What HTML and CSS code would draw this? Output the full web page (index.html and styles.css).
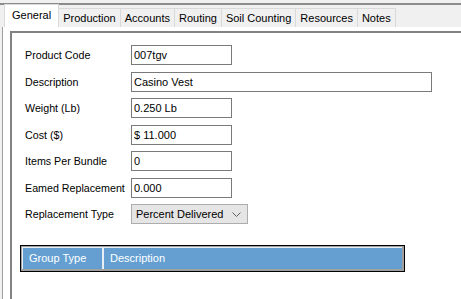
FILE: index.html
```html
<!DOCTYPE html>
<html lang="en">
<head>
    <meta charset="UTF-8">
    <meta name="viewport" content="width=device-width, initial-scale=1.0">
    <title>Product - General</title>
    <link rel="stylesheet" href="styles.css">
</head>
<body>
    <div class="window">
        <div class="tabs">
            <div class="tab active">General</div>
            <div class="tab">Production</div>
            <div class="tab">Accounts</div>
            <div class="tab">Routing</div>
            <div class="tab">Soil Counting</div>
            <div class="tab">Resources</div>
            <div class="tab">Notes</div>
        </div>
        <div class="page">
            <div class="panel">
                <form class="fields">
                    <label for="code">Product Code</label>
                    <input type="text" id="code" class="short" value="007tgv">

                    <label for="desc">Description</label>
                    <input type="text" id="desc" class="long" value="Casino Vest">

                    <label for="weight">Weight (Lb)</label>
                    <input type="text" id="weight" class="short" value="0.250 Lb">

                    <label for="cost">Cost ($)</label>
                    <input type="text" id="cost" class="short" value="$ 11.000">

                    <label for="bundle">Items Per Bundle</label>
                    <input type="text" id="bundle" class="short" value="0">

                    <label for="earned">Eamed Replacement</label>
                    <input type="text" id="earned" class="short" value="0.000">

                    <label for="rtype">Replacement Type</label>
                    <div class="select" id="rtype">
                        <span>Percent Delivered</span>
                        <svg width="9" height="5" viewBox="0 0 9 5"><path d="M0.5 0.5 L4.5 4.5 L8.5 0.5" fill="none" stroke="#606060" stroke-width="1"/></svg>
                    </div>
                </form>
                <div class="grid">
                    <div class="grid-head">
                        <div class="col col-type">Group Type</div>
                        <div class="col col-desc">Description</div>
                    </div>
                </div>
            </div>
        </div>
    </div>
</body>
</html>
```

FILE: styles.css
```css
body {
    margin: 0;
    background-color: #f0f0f0;
    font-family: "Liberation Sans", Arial, sans-serif;
    font-size: 11px;
    color: #000;
}
.window {
    height: 299px;
    padding-top: 3px;
    box-sizing: border-box;
    display: flex;
    flex-direction: column;
}
.tabs {
    display: flex;
    align-items: flex-end;
    height: 22px;
    padding-left: 4px;
    border-top: 2px solid #8c8c8c;
}
.tab {
    height: 18px;
    line-height: 18px;
    padding: 0 4px;
    background-color: #f0f0f0;
    border: 1px solid #d9d9d9;
    border-bottom: none;
    margin-left: -1px;
}
.tab.active {
    position: relative;
    height: 22px;
    line-height: 20px;
    padding: 0 7px;
    margin-left: 0;
    margin-top: -3px;
    background-color: #fff;
    border-color: #d9d9d9;
    z-index: 1;
}
.page {
    flex: 1;
    margin-left: 2px;
    padding: 4px 0 0 7px;
    background-color: #fff;
    border-left: 1px solid #a0a0a0;
    display: flex;
}
.panel {
    flex: 1;
    border-top: 2px solid #828282;
    border-left: 2px solid #828282;
    padding: 12px 0 0 8px;
}
.fields {
    display: grid;
    grid-template-columns: 106px auto;
    row-gap: 6.5px;
    align-items: center;
    justify-items: start;
    padding-left: 5px;
    margin: 0;
}
.fields label {
    white-space: nowrap;
    font-size: 10.7px;
    color: #000;
}
.fields input {
    height: 20px;
    box-sizing: border-box;
    border: 1px solid #7a7a7a;
    padding: 0 2px;
    margin: 0;
    font-family: "Liberation Sans", Arial, sans-serif;
    font-size: 11px;
    color: #000;
    outline: none;
}
.fields input.short {
    width: 101px;
}
.fields input.long {
    width: 301px;
}
.select {
    width: 117px;
    height: 20px;
    box-sizing: border-box;
    border: 1px solid #adadad;
    background-color: #e5e5e5;
    display: flex;
    align-items: center;
    justify-content: space-between;
    padding: 0 6px 0 4px;
}
.grid {
    margin-top: 21px;
    width: 385px;
    height: 27px;
    box-sizing: border-box;
    border: 1px solid #000;
    background-color: #a0a0a0;
    padding: 1px 2px 3px 1px;
}
.grid-head {
    height: 100%;
    display: flex;
    background-color: #659fd1;
    border-top: 1px solid #e8eef5;
    color: #fff;
}
.col {
    line-height: 20px;
    padding-left: 6px;
    border-left: 1px solid #e8eef5;
}
.col-type {
    width: 73px;
}
.col-desc {
    flex: 1;
    border-left-width: 2px;
}
```
